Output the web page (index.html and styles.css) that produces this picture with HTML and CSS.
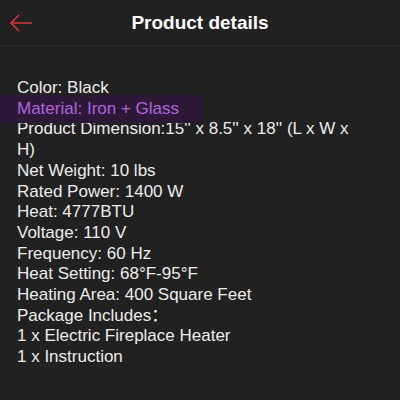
FILE: index.html
```html
<!DOCTYPE html>
<html>
<head>
<meta charset="utf-8">
<link rel="stylesheet" href="styles.css">
</head>
<body>
<div class="app">
  <header class="bar">
    <svg class="back" width="24" height="18" viewBox="0 0 24 18"><path d="M23 9H2M10 1L2 9l8 8" fill="none" stroke="#d0393e" stroke-width="1.6"/></svg>
    <h1 class="title">Product details</h1>
  </header>
  <main class="content">
    <div class="line">Color: Black</div>
    <div class="line hl">Material: Iron + Glass</div>
    <div class="line">Product Dimension:15'' x 8.5'' x 18'' (L x W x H)</div>
    <div class="line">Net Weight: 10 lbs</div>
    <div class="line">Rated Power: 1400 W</div>
    <div class="line">Heat: 4777BTU</div>
    <div class="line">Voltage: 110 V</div>
    <div class="line">Frequency: 60 Hz</div>
    <div class="line">Heat Setting: 68°F-95°F</div>
    <div class="line">Heating Area: 400 Square Feet</div>
    <div class="line">Package Includes：</div>
    <div class="line">1 x Electric Fireplace Heater</div>
    <div class="line">1 x Instruction</div>
  </main>
</div>
</body>
</html>
```

FILE: styles.css
```css
html, body {
  margin: 0;
  padding: 0;
  background: #212121;
}
.app {
  width: 400px;
  height: 400px;
  background: #212121;
  font-family: "Liberation Sans", "Noto Sans CJK SC", Arial, sans-serif;
  color: #f2f2f2;
}
.bar {
  height: 45px;
  border-bottom: 1px solid #2c2c2c;
  display: flex;
  align-items: center;
  justify-content: center;
  position: relative;
}
.back {
  position: absolute;
  left: 9px;
  top: 14px;
}
.title {
  margin: 0;
  font-size: 19px;
  font-weight: bold;
  color: #ffffff;
  padding-top: 1px;
}
.content {
  padding: 32px 17px 0 17px;
  font-size: 17px;
  line-height: 20.7px;
  width: 348px;
}
.line {
  color: #ececec;
}
.hl {
  color: #b163dd;
  background: #2d1937;
  margin-left: -17px;
  padding-left: 17px;
  width: 186px;
  padding-top: 4px;
  padding-bottom: 4px;
  margin-top: -4px;
  margin-bottom: -4px;
  position: relative;
}
```
